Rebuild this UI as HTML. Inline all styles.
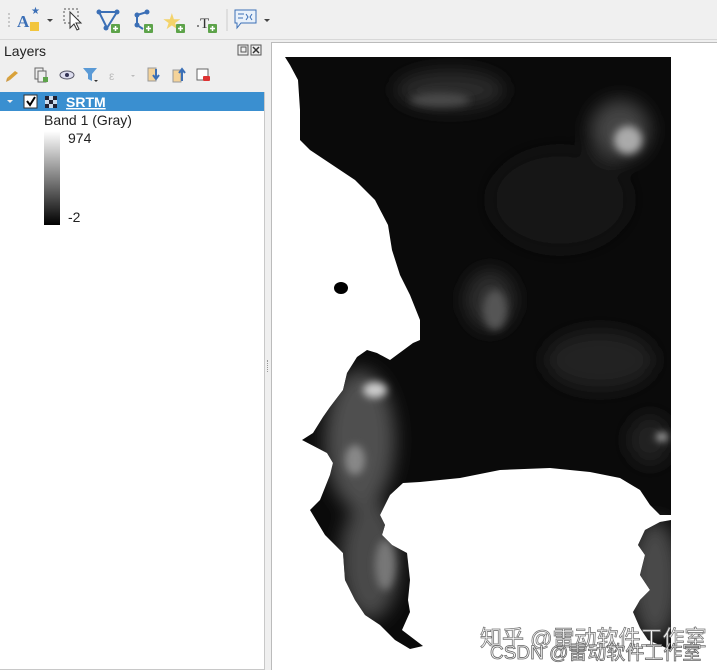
<!DOCTYPE html>
<html><head><meta charset="utf-8"><style>
*{margin:0;padding:0;box-sizing:border-box}
body{width:717px;height:670px;overflow:hidden;background:#efefef;font-family:"Liberation Sans","DejaVu Sans",sans-serif;position:relative}
.tb{position:absolute;left:0;top:0;width:717px;height:40px;background:#f0f0f0;border-bottom:1px solid #d8d8d8}
.panel{position:absolute;left:0;top:41px;width:266px;height:629px;background:#efefef}
.tree{position:absolute;left:0;top:92px;width:265px;height:578px;background:#fff;border:1px solid #c8c8c8;border-left:none}
.sel{position:absolute;left:0;top:92px;width:264px;height:19px;background:#3a8fd0}
.canvas{position:absolute;left:271px;top:42px;width:446px;height:628px;background:#fff;border-left:1px solid #bbb;border-top:1px solid #bbb}
.t{position:absolute;font-size:14px;color:#222;white-space:nowrap}
</style></head><body>
<div class="tb">
<svg width="290" height="40" style="position:absolute;left:0;top:0">
<g fill="#bbb"><circle cx="9" cy="14" r="1"/><circle cx="9" cy="18" r="1"/><circle cx="9" cy="22" r="1"/><circle cx="9" cy="26" r="1"/></g>
<text x="17" y="27" font-size="17" font-weight="bold" fill="#3b6fb6" font-family="Liberation Serif">A</text>
<rect x="30" y="22" width="9" height="9" fill="#f2c53d"/><text x="31" y="14" font-size="10" fill="#3b6fb6">★</text>
<path d="M47 19l3 3 3-3z" fill="#444"/>
<rect x="64" y="9" width="14" height="14" fill="none" stroke="#555" stroke-dasharray="2 2"/>
<path d="M70 12l0 16 4-4 3 6 2-1-3-6 5 0z" fill="#fff" stroke="#333"/>
<path d="M99 12l18 0-10 16z" fill="none" stroke="#3b6fb6" stroke-width="2"/>
<g fill="#3b6fb6"><circle cx="99" cy="12" r="2.5"/><circle cx="117" cy="12" r="2.5"/><circle cx="106" cy="28" r="2.5"/></g>
<rect x="111" y="24" width="9" height="9" rx="1" fill="#5da34a"/><path d="M115.5 26v5M113 28.5h5" stroke="#fff" stroke-width="1.5"/>
<path d="M147 12l-10 3 0 10 6 4" fill="none" stroke="#3b6fb6" stroke-width="2"/>
<g fill="#3b6fb6"><circle cx="147" cy="12" r="2.5"/><circle cx="137" cy="15" r="2.5"/><circle cx="137" cy="25" r="2.5"/></g>
<rect x="144" y="24" width="9" height="9" rx="1" fill="#5da34a"/><path d="M148.5 26v5M146 28.5h5" stroke="#fff" stroke-width="1.5"/>
<text x="162" y="29" font-size="22" fill="#f3d36b">★</text>
<rect x="176" y="24" width="9" height="9" rx="1" fill="#5da34a"/><path d="M180.5 26v5M178 28.5h5" stroke="#fff" stroke-width="1.5"/>
<text x="200" y="28" font-size="15" fill="#333" font-family="Liberation Serif">T</text><circle cx="198" cy="26" r="1" fill="#666"/>
<rect x="208" y="24" width="9" height="9" rx="1" fill="#5da34a"/><path d="M212.5 26v5M210 28.5h5" stroke="#fff" stroke-width="1.5"/>
<line x1="227" y1="9" x2="227" y2="31" stroke="#ccc"/>
<path d="M235 10h21v13h-15l-4 5v-5h-2z" fill="#e9f1fa" stroke="#3b6fb6"/>
<path d="M238 14h6M238 18h5M246 14l2 3-2 3M252 14l-2 3 2 3" stroke="#3b6fb6" fill="none"/>
<path d="M264 19l3 3 3-3z" fill="#444"/>
</svg>
</div>
<div class="panel"></div>
<div class="t" style="left:4px;top:43px">Layers</div>
<svg width="30" height="14" style="position:absolute;left:237px;top:44px"><rect x="1" y="1" width="10" height="10" fill="none" stroke="#555"/><rect x="4" y="3" width="5" height="5" fill="none" stroke="#555"/><rect x="14" y="1" width="10" height="10" fill="none" stroke="#555"/><path d="M16 3l6 6M22 3l-6 6" stroke="#333" stroke-width="1.5"/></svg>
<svg width="215" height="20" style="position:absolute;left:5px;top:65px">
<path d="M2 13l8-7 3 2-8 7z" fill="#d9a23a"/><path d="M2 13l3 2-4 2z" fill="#c94"/>
<rect x="30" y="3" width="8" height="11" fill="#eee" stroke="#666"/><rect x="33" y="6" width="8" height="11" fill="#eee" stroke="#666"/><rect x="38" y="12" width="5" height="5" fill="#5da34a"/>
<ellipse cx="62" cy="10" rx="7" ry="4" fill="#dde" stroke="#556"/><circle cx="62" cy="10" r="2" fill="#335"/>
<path d="M78 3h14l-5 6v7l-4-2v-5z" fill="#5a9ad6"/><path d="M89 15l2 2 2-2z" fill="#333"/>
<text x="104" y="15" font-size="12" fill="#bbb">ε</text><path d="M126 10l2 2 2-2z" fill="#bbb"/>
<rect x="143" y="3" width="8" height="13" fill="#f4d39a" stroke="#999"/><path d="M151 4v9M148 10l3 4 3-4" stroke="#3b6fb6" stroke-width="2" fill="none"/>
<rect x="168" y="5" width="8" height="12" fill="#f4d39a" stroke="#999"/><path d="M177 16v-11M174 8l3-4 3 4" stroke="#3b6fb6" stroke-width="2" fill="none"/>
<rect x="192" y="4" width="11" height="11" fill="#fff" stroke="#666"/><rect x="198" y="11" width="7" height="5" rx="1" fill="#d33"/>
</svg>
<div class="tree"></div>
<div class="sel"></div>
<svg width="110" height="19" style="position:absolute;left:0;top:92px">
<path d="M7 8l3 3 3-3z" fill="#eee"/>
<rect x="24" y="3" width="13" height="13" fill="#fff" stroke="#333"/><path d="M27 9l3 4 5-8" stroke="#000" stroke-width="2" fill="none"/>
<g fill="#223"><rect x="45" y="4" width="4" height="4"/><rect x="53" y="4" width="4" height="4"/><rect x="49" y="8" width="4" height="4"/><rect x="45" y="12" width="4" height="4"/><rect x="53" y="12" width="4" height="4"/></g>
<g fill="#cde"><rect x="49" y="4" width="4" height="4"/><rect x="45" y="8" width="4" height="4"/><rect x="53" y="8" width="4" height="4"/><rect x="49" y="12" width="4" height="4"/></g>
<text x="66" y="15" font-size="14" font-weight="bold" fill="#fff" text-decoration="underline">SRTM</text>
</svg>
<div class="t" style="left:44px;top:112px">Band 1 (Gray)</div>
<div style="position:absolute;left:44px;top:131px;width:16px;height:94px;background:linear-gradient(#fff,#000)"></div>
<div class="t" style="left:68px;top:130px">974</div>
<div class="t" style="left:68px;top:209px">-2</div>
<div style="position:absolute;left:267px;top:360px;width:2px;height:12px;border-left:1px dotted #999"></div>
<div class="canvas"></div>
<svg width="717" height="670" style="position:absolute;left:0;top:0">
<defs>
<clipPath id="land"><path d="M285 57L671 57L671 515L660 515L650 505L640 490L620 478L590 472L550 468L500 470L460 478L420 482L403 483L390 495L380 515L385 525L382 535L392 545L407 553L410 580L408 600L410 612L402 630L423 646L410 649L395 640L380 625L365 615L355 600L345 580L343 553L325 535L310 510L320 500L330 475L333 463L327 453L302 440L313 433L323 417L330 407L343 390L347 373L357 357L367 350L377 353L390 360L413 343L420 340L420 320L410 295L400 275L392 250L388 225L375 200L355 180L340 170L310 150L300 140L300 110L298 80L290 65Z"/>
<path d="M671 520L660 522L645 530L638 545L645 555L640 575L650 590L640 600L633 612L640 628L648 640L671 650Z"/></clipPath>
<filter id="b" x="-100%" y="-100%" width="300%" height="300%"><feGaussianBlur stdDeviation="9"/></filter>
<filter id="b2" x="-100%" y="-100%" width="300%" height="300%"><feGaussianBlur stdDeviation="4"/></filter>
</defs>
<g clip-path="url(#land)">
<rect x="280" y="50" width="400" height="610" fill="#0a0a0a"/>
<g filter="url(#b)">
<ellipse cx="620" cy="130" rx="30" ry="30" fill="#444"/>
<ellipse cx="450" cy="90" rx="55" ry="20" fill="#2a2a2a"/>
<ellipse cx="490" cy="300" rx="25" ry="30" fill="#2e2e2e"/>
<ellipse cx="600" cy="360" rx="55" ry="30" fill="#222"/>
<ellipse cx="560" cy="200" rx="70" ry="50" fill="#151515"/>
<ellipse cx="650" cy="440" rx="22" ry="25" fill="#222"/>
<ellipse cx="360" cy="440" rx="35" ry="70" fill="#505050"/>
<ellipse cx="370" cy="560" rx="30" ry="60" fill="#4a4a4a"/>
<ellipse cx="655" cy="580" rx="25" ry="60" fill="#4a4a4a"/>
</g>
<g filter="url(#b2)">
<ellipse cx="628" cy="140" rx="14" ry="14" fill="#aaa"/>
<ellipse cx="375" cy="390" rx="12" ry="8" fill="#ccc"/>
<ellipse cx="355" cy="460" rx="10" ry="15" fill="#888"/>
<ellipse cx="385" cy="565" rx="10" ry="25" fill="#777"/>
<ellipse cx="662" cy="437" rx="6" ry="4" fill="#bbb"/>
<ellipse cx="440" cy="100" rx="30" ry="7" fill="#4a4a4a"/>
<ellipse cx="495" cy="310" rx="12" ry="20" fill="#555"/>
</g>
</g>
<ellipse cx="341" cy="288" rx="7" ry="6" fill="#000"/>
<text x="480" y="646" font-size="22" fill="#fff" stroke="#777" stroke-width="0.8" font-family="Liberation Sans,Noto Sans CJK SC,sans-serif">知乎 @雷动软件工作室</text>
<text x="490" y="659" font-size="19" fill="#fff" stroke="#666" stroke-width="0.8" font-family="Liberation Sans,Noto Sans CJK SC,sans-serif">CSDN @雷动软件工作室</text>
</svg>
</body></html>
